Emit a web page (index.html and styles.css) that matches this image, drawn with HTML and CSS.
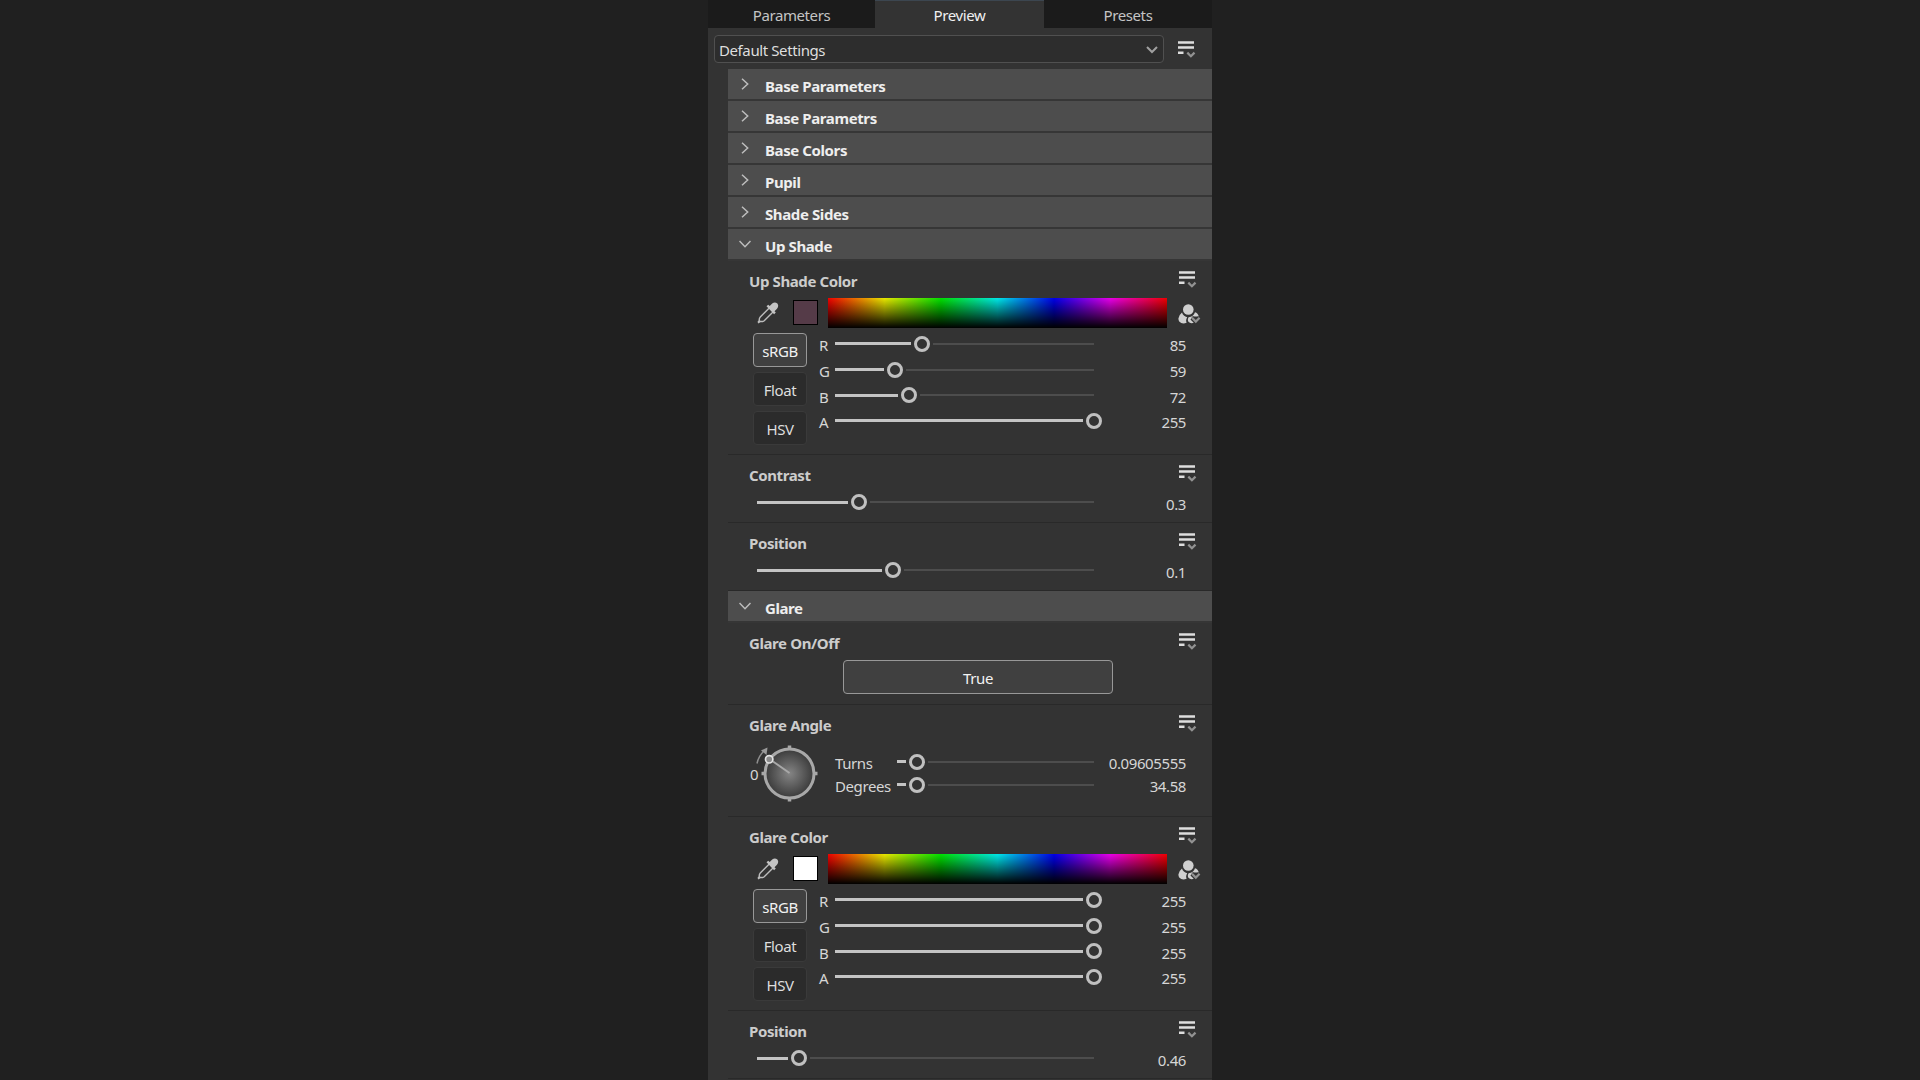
FILE: index.html
```html
<!DOCTYPE html>
<html lang="en">
<head>
  <meta charset="utf-8">
  <title>Preview</title>
  <link rel="stylesheet" href="styles.css">
</head>

<body>
  <svg width="0" height="0" class="defs">
    <symbol id="menu" viewBox="0 0 18 18">
      <path d="M0 1.5h16M0 6.5h16M0 11.7h5.5" stroke="#dedede" stroke-width="2.4" fill="none"/>
      <path d="M9.3 11.6l3.6 3.6 3.6-3.6" stroke="#929292" stroke-width="2.2" fill="none"/>
    </symbol>
    <symbol id="dropper" viewBox="0 0 22 22">
      <path d="M12 6.2L3.3 14.9Q2 16.3 2.3 18.5L1 20.3M16 10.1L7.2 18.7Q5.8 20 3.5 19.3L1 20.8" stroke="#bcbcbc" stroke-width="1.4" fill="none"/>
      <path d="M9.5 4.2L11.2 2.7 12.7 4.1 15.2 1.6Q17.8-.7 20.4 1.6 22.2 4.1 20 6.7L17.5 9.2 18.8 10.6 17.1 12.2Z" fill="#c4c4c4"/>
    </symbol>
    <symbol id="circles" viewBox="0 0 23 20">
      <circle cx="10.3" cy="5.5" r="5.3" fill="#cfcfcf"/>
      <path d="M4 8.5Q5.2 12.2 9.2 13.2 7.4 16 8.6 18.8 4.2 20.8 1.2 17.5-1.3 12.8 4 8.5Z" fill="#cfcfcf"/>
      <path d="M10.6 13.2Q15.5 12.6 17 8.2 20 9 20.8 12.6L14 12.4 13.4 15 16.5 18.3Q13 20.3 10.4 17.8 9.2 15.5 10.6 13.2Z" fill="#cfcfcf"/>
      <path d="M14 13.8l3.8 3.8 3.8-3.8" stroke="#333" stroke-width="4.5" fill="none"/>
      <path d="M14 13.8l3.8 3.8 3.8-3.8" stroke="#929292" stroke-width="2.2" fill="none"/>
    </symbol>
    <symbol id="right" viewBox="0 0 8 12">
      <path d="M1 .7L6.7 6 1 11.3" stroke="#bdbdbd" stroke-width="1.5" fill="none"/>
    </symbol>
    <symbol id="down" viewBox="0 0 12 8">
      <path d="M.5 1L6 6.7 11.5 1" stroke="#bdbdbd" stroke-width="1.5" fill="none"/>
    </symbol>
  </svg>

  <div class="panel">
    <div class="tabs">
      <div class="tab">Parameters</div>
      <div class="tab active">Preview</div>
      <div class="tab">Presets</div>
    </div>

    <div class="preset">
      <div class="select">
        <span>Default Settings</span>
        <svg width="12" height="8" viewBox="0 0 12 8"><path d="M1 1l5 5 5-5" stroke="#a0a0a0" stroke-width="2" fill="none"/></svg>
      </div>
      <svg class="menu"><use href="#menu"/></svg>
    </div>

    <div class="groups">
      <div class="group"><svg class="right"><use href="#right"/></svg><span>Base Parameters</span></div>
      <div class="group"><svg class="right"><use href="#right"/></svg><span>Base Parametrs</span></div>
      <div class="group"><svg class="right"><use href="#right"/></svg><span>Base Colors</span></div>
      <div class="group"><svg class="right"><use href="#right"/></svg><span>Pupil</span></div>
      <div class="group"><svg class="right"><use href="#right"/></svg><span>Shade Sides</span></div>
      <div class="group open"><svg class="down"><use href="#down"/></svg><span>Up Shade</span></div>

      <div class="param color">
        <div class="title"><span>Up Shade Color</span><svg class="menu"><use href="#menu"/></svg></div>
        <div class="picker">
          <svg class="dropper"><use href="#dropper"/></svg>
          <div class="swatch plum"></div>
          <div class="spectrum"></div>
          <svg class="circles"><use href="#circles"/></svg>
        </div>
        <div class="channels">
          <div class="modes">
            <div class="btn on">sRGB</div>
            <div class="btn">Float</div>
            <div class="btn">HSV</div>
          </div>
          <div class="rows">
            <div class="row"><label>R</label><div class="slider"><i class="fill" style="width: 76px"></i><i class="knob"></i><i class="rest"></i></div><output>85</output></div>
            <div class="row"><label>G</label><div class="slider"><i class="fill" style="width: 49px"></i><i class="knob"></i><i class="rest"></i></div><output>59</output></div>
            <div class="row"><label>B</label><div class="slider"><i class="fill" style="width: 63px"></i><i class="knob"></i><i class="rest"></i></div><output>72</output></div>
            <div class="row"><label>A</label><div class="slider"><i class="fill" style="width: 248px"></i><i class="knob"></i></div><output>255</output></div>
          </div>
        </div>
      </div>

      <div class="param single">
        <div class="title"><span>Contrast</span><svg class="menu"><use href="#menu"/></svg></div>
        <div class="row"><div class="slider"><i class="fill" style="width: 91px"></i><i class="knob"></i><i class="rest"></i></div><output>0.3</output></div>
      </div>

      <div class="param single">
        <div class="title"><span>Position</span><svg class="menu"><use href="#menu"/></svg></div>
        <div class="row"><div class="slider"><i class="fill" style="width: 125px"></i><i class="knob"></i><i class="rest"></i></div><output>0.1</output></div>
      </div>

      <div class="group open glare"><svg class="down"><use href="#down"/></svg><span>Glare</span></div>

      <div class="param toggle">
        <div class="title"><span>Glare On/Off</span><svg class="menu"><use href="#menu"/></svg></div>
        <div class="btn on">True</div>
      </div>

      <div class="param angle">
        <div class="title"><span>Glare Angle</span><svg class="menu"><use href="#menu"/></svg></div>
        <div class="angle-body">
          <span class="zero">0</span>
          <svg class="dial" width="64" height="60" viewBox="0 0 64 60">
            <defs>
              <radialGradient id="face">
                <stop offset="0" stop-color="#858585"/>
                <stop offset="1" stop-color="#3a3a3a"/>
              </radialGradient>
            </defs>
            <path d="M34.5 2.5v56M6.500 30.500h56" stroke="#a8a8a8" stroke-width="3.500"/>
            <circle cx="34.500" cy="30.500" r="24.500" fill="url(#face)" stroke="#a8a8a8" stroke-width="3"/>
            <path d="M34.500 30L18 18.500" stroke="#a8a8a8" stroke-width="2"/>
            <circle cx="14.200" cy="16.300" r="3.700" fill="#8a8a8a" stroke="#e2e2e2" stroke-width="1.700"/>
            <path d="M2 20.500Q3.500 13 9 8" stroke="#8e8e8e" stroke-width="1.500" fill="none"/>
            <path d="M12.500 4.500L11.500 12 6 7.500Z" fill="#9a9a9a"/>
          </svg>
          <div class="rows">
            <div class="row"><label>Turns</label><div class="slider"><i class="fill" style="width: 9px"></i><i class="knob"></i><i class="rest"></i></div><output>0.09605555</output></div>
            <div class="row"><label>Degrees</label><div class="slider"><i class="fill" style="width: 9px"></i><i class="knob"></i><i class="rest"></i></div><output>34.58</output></div>
          </div>
        </div>
      </div>

      <div class="param color">
        <div class="title"><span>Glare Color</span><svg class="menu"><use href="#menu"/></svg></div>
        <div class="picker">
          <svg class="dropper"><use href="#dropper"/></svg>
          <div class="swatch white"></div>
          <div class="spectrum"></div>
          <svg class="circles"><use href="#circles"/></svg>
        </div>
        <div class="channels">
          <div class="modes">
            <div class="btn on">sRGB</div>
            <div class="btn">Float</div>
            <div class="btn">HSV</div>
          </div>
          <div class="rows">
            <div class="row"><label>R</label><div class="slider"><i class="fill" style="width: 248px"></i><i class="knob"></i></div><output>255</output></div>
            <div class="row"><label>G</label><div class="slider"><i class="fill" style="width: 248px"></i><i class="knob"></i></div><output>255</output></div>
            <div class="row"><label>B</label><div class="slider"><i class="fill" style="width: 248px"></i><i class="knob"></i></div><output>255</output></div>
            <div class="row"><label>A</label><div class="slider"><i class="fill" style="width: 248px"></i><i class="knob"></i></div><output>255</output></div>
          </div>
        </div>
      </div>

      <div class="param single">
        <div class="title"><span>Position</span><svg class="menu"><use href="#menu"/></svg></div>
        <div class="row"><div class="slider"><i class="fill" style="width: 31px"></i><i class="knob"></i><i class="rest"></i></div><output>0.46</output></div>
      </div>
    </div>
  </div>
</body>
</html>
```

FILE: styles.css
```css
* {
  box-sizing: border-box;
}
body {
  margin: 0;
  height: 1080px;
  overflow: hidden;
  background: #202020;
  color: #d6d6d6;
  font: 15px/20px "Noto Sans", "Open Sans", sans-serif;
  letter-spacing: -0.4px;
}
svg {
  display: block;
  flex: none;
}
.defs {
  position: absolute;
}
.panel {
  width: 504px;
  height: 1080px;
  margin-left: 708px;
  background: #333;
  overflow: hidden;
}

.tabs {
  display: grid;
  grid-template-columns: 167px 169px 168px;
  height: 28px;
}
.tab {
  padding-top: 5px;
  background: #1b1b1b;
  color: #c4c4c4;
  text-align: center;
}
.tab.active {
  background: #333;
  border-top: 1px solid #3c4650;
  padding-top: 4px;
  color: #f0f0f0;
}

.preset {
  display: flex;
  height: 41px;
  padding: 7px 16px 0 6px;
}
.select {
  display: flex;
  align-items: center;
  justify-content: space-between;
  width: 451px;
  height: 28px;
  padding: 1px 5px 0 4px;
  margin-right: 14px;
  background: #2d2d2d;
  border: 1px solid #505050;
  border-radius: 4px;
  color: #dedede;
}
.menu {
  width: 18px;
  height: 18px;
}
.preset .menu {
  margin-top: 6px;
}

.groups {
  margin-left: 20px;
}
.group {
  display: flex;
  align-items: center;
  height: 32px;
  background: #4d4d4d;
  border-bottom: 2px solid #363636;
  color: #eee;
  font-weight: bold;
}
.group span {
  padding-top: 3px;
}
.right {
  width: 8px;
  height: 12px;
  margin: 0 16px 0 13px;
}
.down {
  width: 12px;
  height: 8px;
  margin: 0 14px 0 11px;
}

.param {
  padding: 0 16px 0 21px;
  border-bottom: 1px solid #292929;
}
.title {
  display: flex;
  justify-content: space-between;
  height: 37px;
  padding-top: 10px;
  color: #ccc;
  font-weight: bold;
}
.title .menu {
  margin-right: -1px;
}
.color {
  height: 194px;
}
.single {
  height: 68px;
}
.toggle {
  height: 82px;
}
.angle {
  height: 112px;
}

.picker {
  display: flex;
  height: 30px;
  margin-right: -8px;
}
.dropper {
  width: 22px;
  height: 22px;
  margin: 4px 14px 0 8px;
}
.swatch {
  width: 25px;
  height: 25px;
  margin: 2px 10px 0 0;
  border: 1px solid #000;
}
.plum {
  background: #553b48;
}
.white {
  background: #fff;
}
.spectrum {
  width: 339px;
  height: 30px;
  background:
    linear-gradient(transparent, #000),
    linear-gradient(90deg, #f00000, #e8e800 16.7%, #00e000 33.3%, #00e8e8 50%, #0000e8 66.7%, #e800e8 83.3%, #f00000);
}
.circles {
  width: 23px;
  height: 20px;
  margin: 6px 0 0 11px;
}

.channels {
  display: flex;
}
.modes {
  display: grid;
  grid-auto-rows: 34px;
  gap: 5px;
  width: 54px;
  margin: 5px 12px 0 4px;
}
.btn {
  display: flex;
  align-items: center;
  justify-content: center;
  padding-top: 2px;
  background: #2b2b2b;
  border: 1px solid #3a3a3a;
  border-radius: 4px;
  color: #dedede;
}
.btn.on {
  background: #404040;
  border-color: #989898;
  color: #f2f2f2;
}
.toggle .btn {
  width: 270px;
  height: 34px;
  margin-left: 94px;
}

.rows {
  flex: 1;
}
.color .rows {
  padding-top: 3px;
}
.row {
  display: flex;
  align-items: center;
}
.color .row {
  height: 25.7px;
}
.color label {
  width: 16px;
}
.row label, .row output {
  padding-top: 3px;
}
.row output {
  flex: 1;
  text-align: right;
  margin-right: 10px;
}
.single .row {
  height: 20px;
  padding-left: 8px;
}
.slider {
  display: flex;
  align-items: center;
  flex: none;
  width: 259px;
}
.single .slider {
  width: 337px;
}
.fill {
  flex: none;
  height: 3px;
  background: #c4c4c4;
}
.knob {
  flex: none;
  width: 16px;
  height: 16px;
  margin: 0 3px 0 3px;
  border: 3px solid #c0c0c0;
  border-radius: 50%;
}
.rest {
  flex: 1;
  height: 2px;
  background: #4d4d4d;
}

.angle-body {
  display: flex;
  align-items: flex-start;
}
.zero {
  width: 7px;
  margin: 22px -1px 0 1px;
}
.dial {
  margin: 1px 16px 0 -1px;
}
.angle .rows {
  padding-top: 8px;
}
.angle .row {
  height: 23px;
}
.angle label {
  width: 62px;
}
.angle .slider {
  width: 197px;
}
```
